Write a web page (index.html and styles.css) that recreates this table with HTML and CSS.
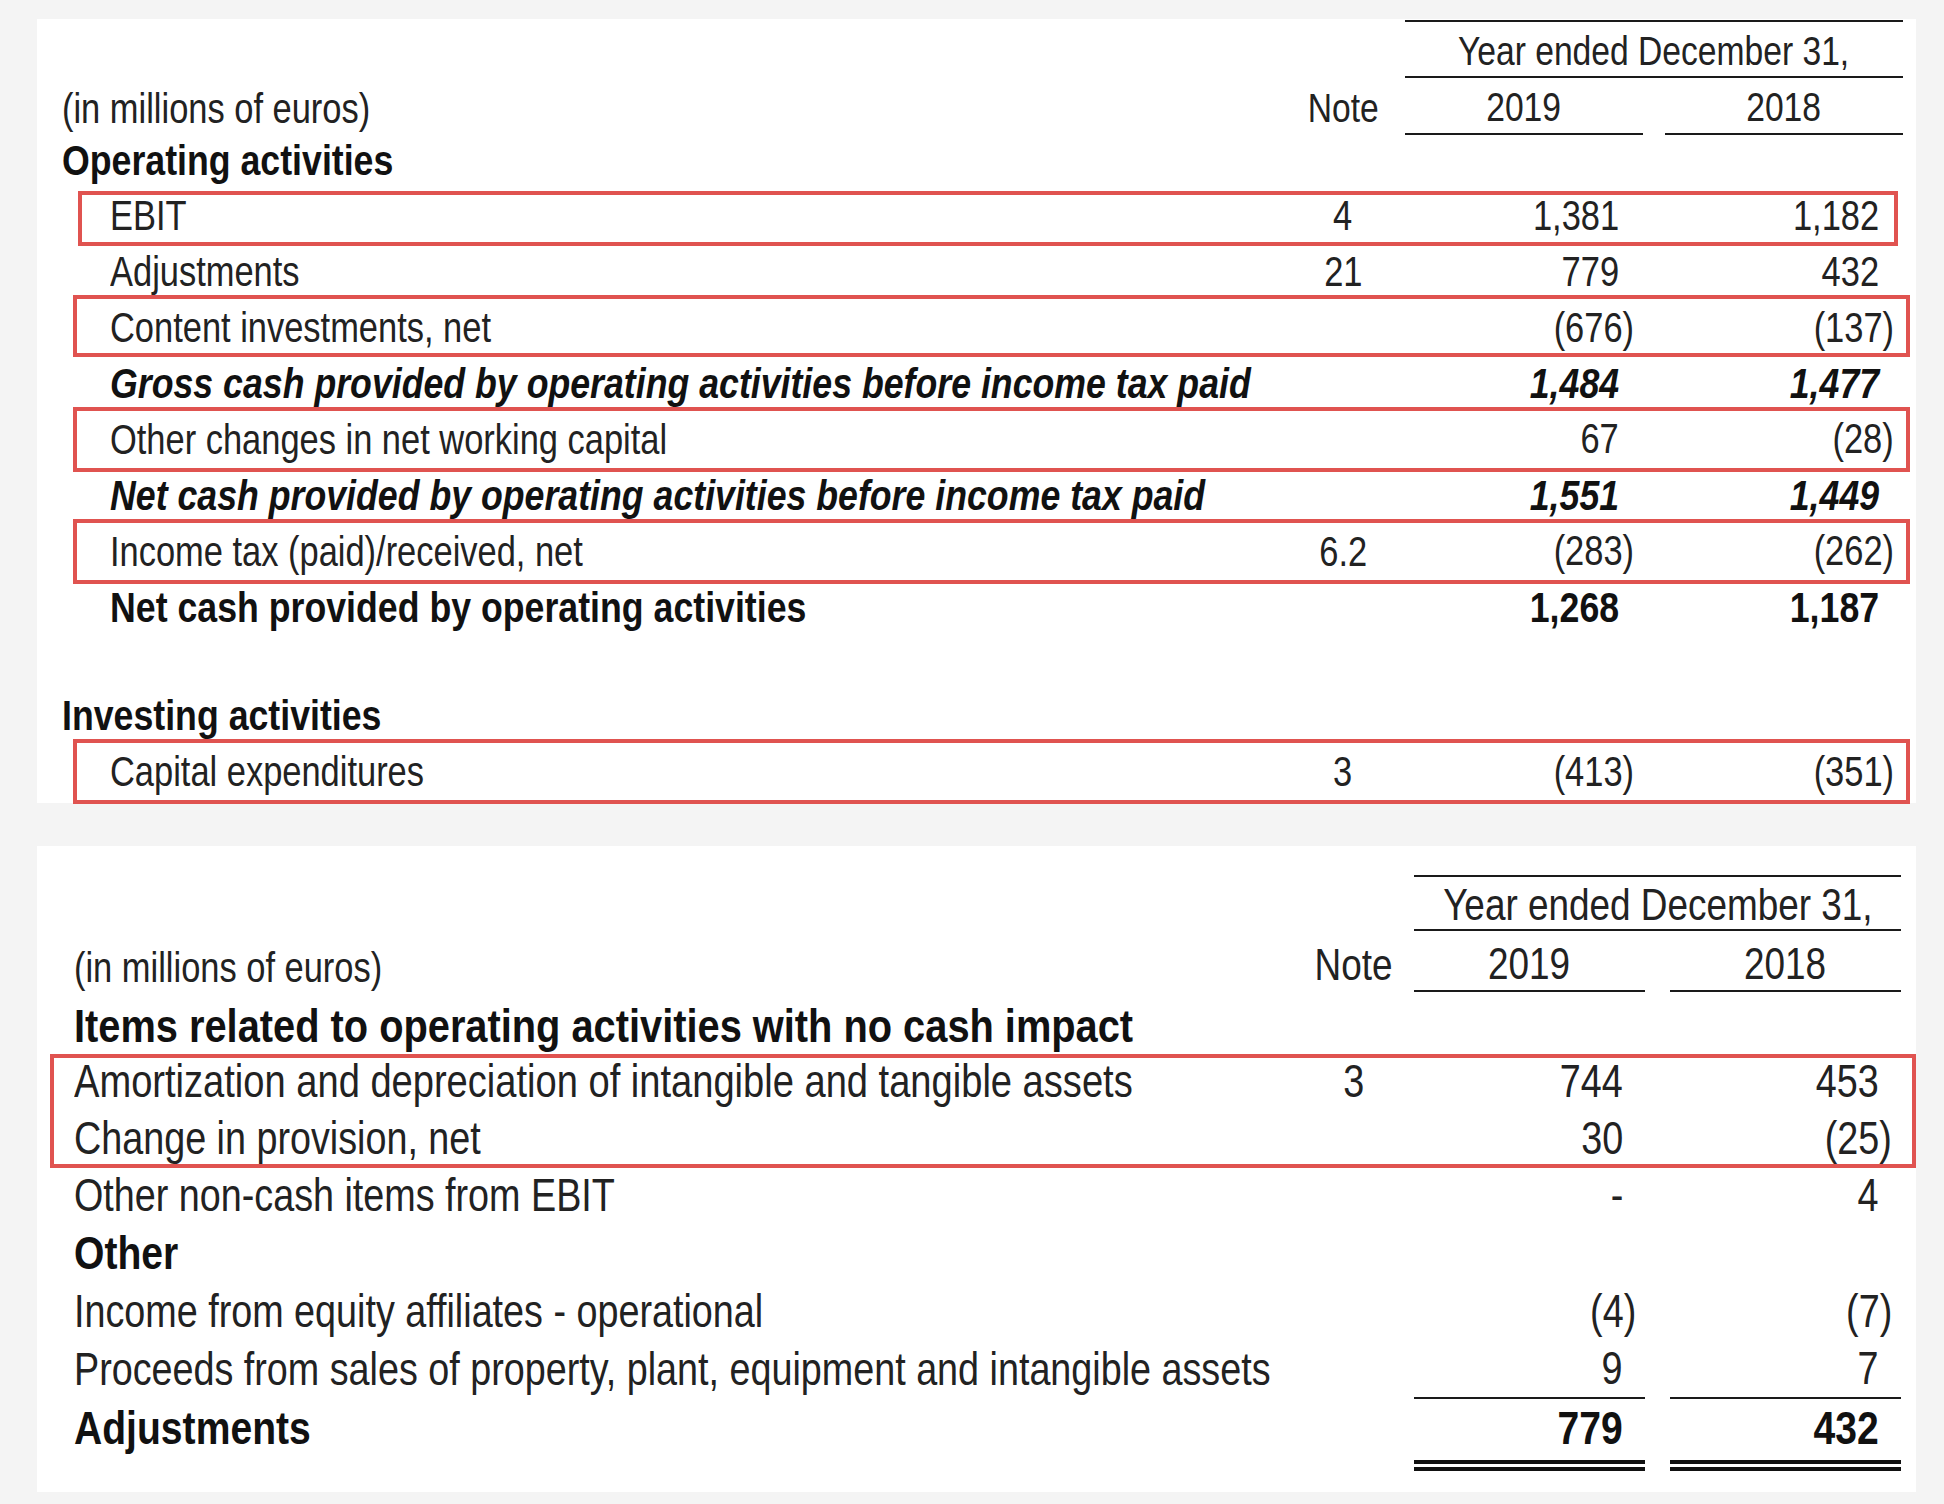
FILE: index.html
```html
<!DOCTYPE html>
<html lang="en">
<head>
<meta charset="utf-8">
<title>Cash flow extract</title>
<link rel="stylesheet" href="styles.css">
</head>
<body>
<main class="page">
  <section class="panel p1">
    <div class="row head1">
      <div class="lab"></div><div class="note"></div>
      <div class="yeargroup"><span class="t">Year ended December 31,</span></div>
    </div>
    <div class="row head2">
      <div class="lab unit"><span class="t">(in millions of euros)</span></div>
      <div class="note"><span class="t">Note</span></div>
      <div class="yr"><span class="t">2019</span></div>
      <div class="yr"><span class="t">2018</span></div>
    </div>
    <div class="row r-sect"><div class="lab sect"><span class="t">Operating activities</span></div></div>
    <div class="row hl hl-narrow">
      <div class="lab ind"><span class="t">EBIT</span></div><div class="note"><span class="t">4</span></div>
      <div class="v"><span class="t">1,381</span></div><div class="v"><span class="t">1,182</span></div>
    </div>
    <div class="row">
      <div class="lab ind"><span class="t">Adjustments</span></div><div class="note"><span class="t">21</span></div>
      <div class="v"><span class="t">779</span></div><div class="v"><span class="t">432</span></div>
    </div>
    <div class="row hl hl-content">
      <div class="lab ind"><span class="t">Content investments, net</span></div><div class="note"></div>
      <div class="v neg"><span class="t">(676)</span></div><div class="v neg"><span class="t">(137)</span></div>
    </div>
    <div class="row bi">
      <div class="lab ind"><span class="t">Gross cash provided by operating activities before income tax paid</span></div><div class="note"></div>
      <div class="v"><span class="t">1,484</span></div><div class="v"><span class="t">1,477</span></div>
    </div>
    <div class="row hl">
      <div class="lab ind"><span class="t">Other changes in net working capital</span></div><div class="note"></div>
      <div class="v ul"><span class="t">67</span></div><div class="v neg ul"><span class="t">(28)</span></div>
    </div>
    <div class="row bi">
      <div class="lab ind"><span class="t">Net cash provided by operating activities before income tax paid</span></div><div class="note"></div>
      <div class="v"><span class="t">1,551</span></div><div class="v"><span class="t">1,449</span></div>
    </div>
    <div class="row hl">
      <div class="lab ind"><span class="t">Income tax (paid)/received, net</span></div><div class="note"><span class="t">6.2</span></div>
      <div class="v neg ul"><span class="t">(283)</span></div><div class="v neg ul"><span class="t">(262)</span></div>
    </div>
    <div class="row b">
      <div class="lab ind"><span class="t">Net cash provided by operating activities</span></div><div class="note"></div>
      <div class="v"><span class="t">1,268</span></div><div class="v"><span class="t">1,187</span></div>
    </div>
    <div class="row spacer"></div>
    <div class="row"><div class="lab sect"><span class="t">Investing activities</span></div></div>
    <div class="row hl">
      <div class="lab ind"><span class="t">Capital expenditures</span></div><div class="note"><span class="t">3</span></div>
      <div class="v neg"><span class="t">(413)</span></div><div class="v neg"><span class="t">(351)</span></div>
    </div>
  </section>

  <section class="panel p2">
    <div class="row head1">
      <div class="lab"></div><div class="note"></div>
      <div class="yeargroup"><span class="t">Year ended December 31,</span></div>
    </div>
    <div class="row head2">
      <div class="lab unit"><span class="t">(in millions of euros)</span></div>
      <div class="note"><span class="t">Note</span></div>
      <div class="yr"><span class="t">2019</span></div>
      <div class="yr"><span class="t">2018</span></div>
    </div>
    <div class="row r-items"><div class="lab sect"><span class="t">Items related to operating activities with no cash impact</span></div></div>
    <div class="group hl-group">
      <div class="row r-amort">
        <div class="lab"><span class="t">Amortization and depreciation of intangible and tangible assets</span></div><div class="note"><span class="t">3</span></div>
        <div class="v"><span class="t">744</span></div><div class="v"><span class="t">453</span></div>
      </div>
      <div class="row">
        <div class="lab"><span class="t">Change in provision, net</span></div><div class="note"></div>
        <div class="v"><span class="t">30</span></div><div class="v neg"><span class="t">(25)</span></div>
      </div>
    </div>
    <div class="row r-tall">
      <div class="lab"><span class="t">Other non-cash items from EBIT</span></div><div class="note"></div>
      <div class="v"><span class="t">-</span></div><div class="v"><span class="t">4</span></div>
    </div>
    <div class="row r-tall"><div class="lab sect"><span class="t">Other</span></div></div>
    <div class="row r-tall">
      <div class="lab"><span class="t">Income from equity affiliates - operational</span></div><div class="note"></div>
      <div class="v neg"><span class="t">(4)</span></div><div class="v neg"><span class="t">(7)</span></div>
    </div>
    <div class="row">
      <div class="lab"><span class="t">Proceeds from sales of property, plant, equipment and intangible assets</span></div><div class="note"></div>
      <div class="v ul"><span class="t">9</span></div><div class="v ul"><span class="t">7</span></div>
    </div>
    <div class="row b total">
      <div class="lab"><span class="t">Adjustments</span></div><div class="note"></div>
      <div class="v dbl"><span class="t">779</span></div><div class="v dbl"><span class="t">432</span></div>
    </div>
  </section>
</main>
</body>
</html>
```

FILE: styles.css
```css
html, body {
  margin: 0;
  padding: 0;
  background: #f4f4f4;
}

.page {
  padding: 19px 28px 12px 37px;
  font-family: "Liberation Sans", Arial, sans-serif;
  color: #222222;
}

.panel {
  background: #ffffff;
  display: flex;
  flex-direction: column;
  box-sizing: border-box;
}

.p1 {
  padding: 1px 13px 1px 25px;
  height: 784px;
  font-size: 42px;
}

.p2 {
  margin-top: 43px;
  padding: 29px 15px 21px 37px;
  height: 646px;
  font-size: 46px;
}

/* rows */
.row {
  display: grid;
  align-items: center;
  position: relative;
  white-space: nowrap;
  flex: none;
}

.p1 .row {
  grid-template-columns: minmax(0, 1fr) 80px 238px 238px;
  column-gap: 22px;
  height: 56px;
}

.p2 .row {
  grid-template-columns: minmax(0, 1fr) 70px 231px 231px;
  column-gap: 25px;
  height: 57px;
}

.lab, .note, .v, .yr, .yeargroup {
  min-width: 0;
  line-height: 1;
  height: 100%;
  box-sizing: border-box;
  display: flex;
  align-items: center;
}

.lab { justify-content: flex-start; }
.note { justify-content: center; }
.v { justify-content: flex-end; }

/* nudge body text a touch above the row centre */
.row > .lab, .row > .note, .row > .v { padding-bottom: 4px; }

/* condensed text */
.t {
  display: inline-block;
  flex: none;
  transform: scaleX(0.82);
  transform-origin: left center;
}
.note .t, .yr .t, .yeargroup .t { transform-origin: center center; }
.v .t { transform-origin: right center; }
.sect .t, .b .t, .bi .t { transform: scaleX(0.85); }
.p2 .r-items .sect .t { transform: scaleX(0.865); }
.p2 .r-amort .lab .t { transform: scaleX(0.828); }

.p1 .v { padding-right: 24px; }
.p1 .v.neg { padding-right: 9px; }
.p2 .v { padding-right: 22px; }
.p2 .v.neg { padding-right: 9px; }

.ind { padding-left: 48px; }

.sect, .b { font-weight: bold; color: #111111; }
.bi { font-weight: bold; font-style: italic; color: #111111; }

/* header */
.yeargroup {
  grid-column: 3 / 5;
  border-top: 2px solid #1a1a1a;
  border-bottom: 2px solid #1a1a1a;
  justify-content: center;
}

.yr {
  border-bottom: 2px solid #1a1a1a;
  justify-content: center;
}

.p1 .head1 { height: 58px; }
.p1 .head1 .yeargroup { padding-top: 4px; font-size: 41px; }
.p1 .head2 { height: 57px; }
.p1 .head2 .note, .p1 .head2 .yr { font-size: 41px; }
.p1 .head2 > .lab, .p1 .head2 > .note, .p1 .head2 > .yr { padding-top: 4px; padding-bottom: 0; }
.p1 .r-sect { height: 55px; }

.p2 .head1 { height: 56px; }
.p2 .head1 .yeargroup { font-size: 45px; padding-top: 2px; }
.p2 .head2 { height: 61px; margin-bottom: 9px; }
.p2 .head2 .note, .p2 .head2 .yr { font-size: 45px; }
.p2 .head2 > .note, .p2 .head2 > .yr { padding-top: 6px; padding-bottom: 0; }
.p2 .head2 > .lab { font-size: 42px; padding-top: 12px; padding-bottom: 0; }
.p2 .r-items { height: 54px; }
.p2 .r-amort { height: 56px; }
.p2 .r-tall { height: 58px; }

.unit { font-size: 42px; }

.ul { border-bottom: 2px solid #1a1a1a; }

.p2 .total { height: 72px; }
.p2 .total > .lab { padding-bottom: 15px; }
.dbl { border-bottom: 11px double #111111; padding-bottom: 4px; }

.p1 .spacer { height: 52px; }

/* red highlight frames */
.hl::after, .hl-group::after {
  content: "";
  position: absolute;
  border: 4px solid #e05350;
  pointer-events: none;
}

.hl::after {
  left: 11px;
  right: -7px;
  top: -7px;
  bottom: -2px;
}

.hl-content::after {
  top: -7px;
  bottom: 1px;
}

.hl-narrow::after {
  left: 16px;
  right: 5px;
  top: 1px;
  bottom: 0;
}

.hl-group { position: relative; }

.hl-group::after {
  left: -24px;
  right: -15px;
  top: -1px;
  bottom: 0;
}
```
